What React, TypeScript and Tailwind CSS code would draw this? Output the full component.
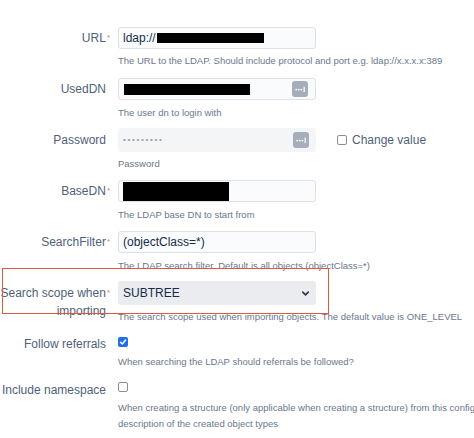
import { ChevronDown } from "lucide-react";
import type { ReactNode } from "react";

const font = { fontFamily: '"Liberation Sans", Arial, sans-serif' };

function DotsButton() {
  return (
    <svg width="16" height="16" viewBox="0 0 16 16" className="absolute right-[7px] top-1/2 -translate-y-1/2">
      <rect x="0" y="0" width="16" height="16" rx="3" fill="#a7aebb" />
      <circle cx="4.2" cy="8.6" r="0.95" fill="#fff" />
      <circle cx="6.8" cy="8.6" r="0.95" fill="#fff" />
      <circle cx="9.4" cy="8.6" r="0.95" fill="#fff" />
      <line x1="12.2" y1="5.8" x2="12.2" y2="11" stroke="#fff" strokeWidth="1.2" />
    </svg>
  );
}

function Checkbox({ checked }: { checked?: boolean }) {
  if (checked) {
    return (
      <span className="flex h-[10px] w-[10px] items-center justify-center rounded-[2px] bg-[#1f6fe6]">
        <svg width="8" height="8" viewBox="0 0 8 8">
          <path d="M1.5 4.2 L3.3 6 L6.6 2" stroke="#fff" strokeWidth="1.5" fill="none" strokeLinecap="round" strokeLinejoin="round" />
        </svg>
      </span>
    );
  }
  return <span className="block h-[10px] w-[10px] rounded-[2px] border border-[#8a8f98] bg-white" />;
}

function Star() {
  return <span className="relative -top-[2px] ml-[1px] text-[8px] text-[#e0775f]">*</span>;
}

function Label({ text, required, pt, extra }: { text: ReactNode; required?: boolean; pt: string; extra?: ReactNode }) {
  return (
    <div className={`w-[110px] shrink-0 text-right text-[12px] leading-[16px] text-[#505f79] ${pt} ${required ? "" : "pr-[4px]"}`}>
      {text}
      {required && <Star />}
      {extra}
    </div>
  );
}

function Help({ children, mt }: { children: ReactNode; mt: string }) {
  return <p className={`${mt} whitespace-nowrap text-[9.5px] leading-[14px] text-[#6b778c]`}>{children}</p>;
}

const inputBox = "relative flex h-[22px] w-[198px] items-center rounded-[3px] border border-[#dfe1e6] bg-[#fafbfc] pl-[4px] text-[12px] text-[#172b4d]";

export default function App() {
  return (
    <main className="relative h-[438px] w-[474px] overflow-hidden bg-white" style={font}>
      <section className="flex flex-col pt-[27px]">
        {/* URL */}
        <div className="flex gap-[8px]">
          <Label text="URL" required pt="pt-[3px]" />
          <div>
            <div className={inputBox}>
              <span>ldap://</span>
              <span className="ml-[1px] inline-block h-[10px] w-[107px] bg-black" />
            </div>
            <Help mt="mt-[5px]">The URL to the LDAP. Should include protocol and port e.g. ldap://x.x.x.x:389</Help>
          </div>
        </div>

        {/* UsedDN */}
        <div className="mt-[10px] flex gap-[8px]">
          <Label text="UsedDN" pt="pt-[3px]" />
          <div>
            <div className={inputBox}>
              <span className="ml-px inline-block h-[11px] w-[126px] bg-black" />
              <DotsButton />
            </div>
            <Help mt="mt-[6px]">The user dn to login with</Help>
          </div>
        </div>

        {/* Password */}
        <div className="mt-[8px] flex gap-[8px]">
          <Label text="Password" pt="pt-[4px]" />
          <div>
            <div className="flex items-center">
              <div className="relative flex h-[24px] w-[198px] items-center rounded-[3px] bg-[#f4f5f7] pl-[5px]">
                <span className="text-[8px] tracking-[1.7px] text-[#97a0af]">•••••••••</span>
                <DotsButton />
              </div>
              <label className="ml-[21px] flex items-center gap-[5px] text-[12px] text-[#505f79]">
                <Checkbox />
                Change value
              </label>
            </div>
            <Help mt="mt-[5px]">Password</Help>
          </div>
        </div>

        {/* BaseDN */}
        <div className="mt-[9px] flex gap-[8px]">
          <Label text="BaseDN" required pt="pt-[3px]" />
          <div>
            <div className={`${inputBox} pl-[1px]`}>
              <span className="inline-block h-[19px] w-[106px] bg-black" />
            </div>
            <Help mt="mt-[6px]">The LDAP base DN to start from</Help>
          </div>
        </div>

        {/* SearchFilter */}
        <div className="mt-[9px] flex gap-[8px]">
          <Label text="SearchFilter" required pt="pt-[3px]" />
          <div>
            <div className={inputBox}>(objectClass=*)</div>
            <Help mt="mt-[6px]">The LDAP search filter. Default is all objects (objectClass=*)</Help>
          </div>
        </div>

        {/* Search scope */}
        <div className="mt-[8px] flex gap-[8px]">
          <div className="w-[110px] shrink-0 pt-[4px] text-right text-[12px] leading-[16px] text-[#505f79]">
            Search scope when<Star />
            <br />
            <span className="pr-[4px]">importing</span>
          </div>
          <div>
            <div className="relative flex h-[24px] w-[198px] items-center rounded-[3px] bg-[#ebecf0] pl-[5px] text-[12px] text-[#172b4d]">
              SUBTREE
              <ChevronDown size={11} strokeWidth={3.5} className="absolute right-[5px] text-[#253858]" />
            </div>
            <Help mt="mt-[5px]">The search scope used when importing objects. The default value is ONE_LEVEL</Help>
          </div>
        </div>

        {/* Follow referrals */}
        <div className="mt-[12px] flex gap-[8px]">
          <Label text="Follow referrals" pt="pt-0" />
          <div>
            <div className="h-[16px] pt-[1px]">
              <Checkbox checked />
            </div>
            <Help mt="mt-[3px]">When searching the LDAP should referrals be followed?</Help>
          </div>
        </div>

        {/* Include namespace */}
        <div className="mt-[13px] flex gap-[8px]">
          <Label text="Include namespace" pt="pt-0" />
          <div>
            <div className="h-[16px]">
              <Checkbox />
            </div>
            <div className="mt-[2px] whitespace-nowrap text-[9.5px] leading-[16px] text-[#6b778c]">
              <p>When creating a structure (only applicable when creating a structure) from this configuration, add a namespace to the name and</p>
              <p>description of the created object types</p>
            </div>
          </div>
        </div>
      </section>

      {/* annotation box */}
      <div className="absolute left-[2px] top-[268px] h-[46px] w-[327px] border-[1.5px] border-[#e3573f]" />
    </main>
  );
}
